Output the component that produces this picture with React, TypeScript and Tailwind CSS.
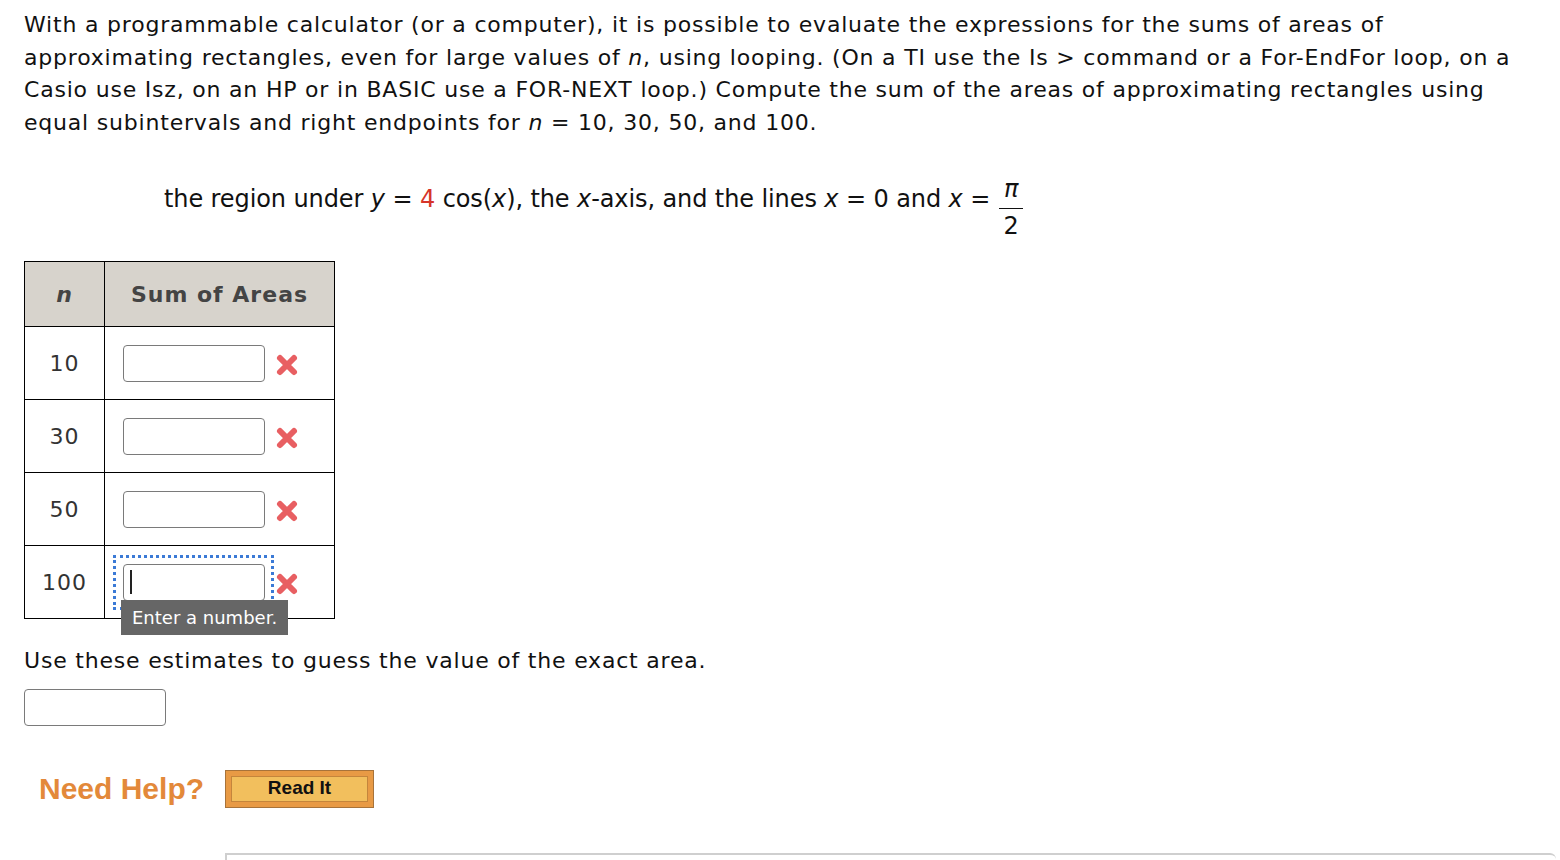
import React from 'react';

const rows = ['10', '30', '50', '100'];

function RedX() {
  return (
    <svg width="24" height="24" viewBox="0 0 24 24" className="shrink-0">
      <path
        d="M5 5 L19 19 M19 5 L5 19"
        stroke="#e5494c"
        strokeWidth="6"
        strokeLinecap="round"
        fill="none"
        opacity="0.88"
      />
    </svg>
  );
}

export default function App() {
  return (
    <div
      className="relative min-h-[860px] bg-white text-black"
      style={{ fontFamily: '"DejaVu Sans", Verdana, sans-serif' }}
    >
      <div className="pl-[24px] pt-[9px] text-[22px] leading-[32.5px] tracking-[0.8px] text-[#111]">
        With a programmable calculator (or a computer), it is possible to evaluate the expressions for the sums of areas of
        <br />
        approximating rectangles, even for large values of <i>n</i>, using looping. (On a TI use the Is &gt; command or a For-EndFor loop, on a
        <br />
        Casio use Isz, on an HP or in BASIC use a FOR-NEXT loop.) Compute the sum of the areas of approximating rectangles using
        <br />
        equal subintervals and right endpoints for <i>n</i> = 10, 30, 50, and 100.
      </div>

      <div className="mt-[38px] flex items-start pl-[164px] text-[24px] text-[#111]">
        <span className="mt-[8px] leading-[28px] tracking-[-0.1px]">
          the region under <i>y</i> = <span className="text-[#d6342a]">4</span> cos(<i>x</i>), the <i>x</i>-axis, and the lines <i>x</i> = 0 and <i>x</i> =
        </span>
        <span className="ml-[9px] inline-flex flex-col items-center leading-[24px]">
          <i className="px-[3px] pb-[7px]">π</i>
          <span className="h-px w-[24px] bg-[#111]" />
          <span className="pt-[5px]">2</span>
        </span>
      </div>

      <div className="ml-[24px] mt-[23px] w-[311px]">
        <table className="w-[311px] border-collapse border border-black">
          <thead>
            <tr className="h-[65px] bg-[#d7d3cc] text-[22px] font-bold tracking-[1px] text-[#444]">
              <th className="w-[80px] border border-black italic">n</th>
              <th className="border border-black">Sum of Areas</th>
            </tr>
          </thead>
          <tbody>
            {rows.map((n, i) => (
              <tr key={n} className="h-[73px]">
                <td className="border border-black text-center text-[22px] tracking-[1px] text-[#333]">{n}</td>
                <td className="border border-black p-0">
                  <div className="relative flex items-center pl-[18px]">
                    {i === 3 && (
                      <div className="absolute left-[8px] top-[-9px] h-[55px] w-[161px] border-[3px] border-dotted border-[#3b7ad6]" />
                    )}
                    <div className="relative flex h-[37px] w-[142px] items-center rounded-[4px] border border-[#7a7a7a] bg-white pl-[6px]">
                      {i === 3 && <span className="h-[24px] w-[2px] bg-[#222]" />}
                    </div>
                    <div className="relative ml-[10px] mt-[4px]">
                      <RedX />
                    </div>
                    {i === 3 && (
                      <div className="absolute left-[16px] top-[36px] flex h-[35px] items-center bg-[#666] px-[11px] text-[18px] text-white">
                        Enter a number.
                      </div>
                    )}
                  </div>
                </td>
              </tr>
            ))}
          </tbody>
        </table>
      </div>

      <div className="pl-[24px] pt-[27px] text-[22px] leading-[30px] tracking-[0.8px] text-[#111]">
        Use these estimates to guess the value of the exact area.
      </div>
      <div className="ml-[24px] mt-[13px] h-[37px] w-[142px] rounded-[4px] border border-[#7a7a7a]" />

      <div className="mt-[40px] flex items-center" style={{ fontFamily: '"Liberation Sans", Arial, sans-serif' }}>
        <span className="ml-[39px] text-[30px] font-bold text-[#e3893a]">Need Help?</span>
        <div className="ml-[21px] flex h-[38px] w-[149px] items-center justify-center border border-[#a8733a] bg-[#e89a45] p-[5px]">
          <div className="flex h-full w-full items-center justify-center border border-[#c4853c] bg-[#f2bf5d] text-[19px] font-bold text-[#111]">
            Read It
          </div>
        </div>
      </div>

      <div className="ml-[225px] mt-[42px] mr-[4px] h-[10px] rounded-tr-[6px] border-l-2 border-t-2 border-[#cfcfcf]" />
    </div>
  );
}
